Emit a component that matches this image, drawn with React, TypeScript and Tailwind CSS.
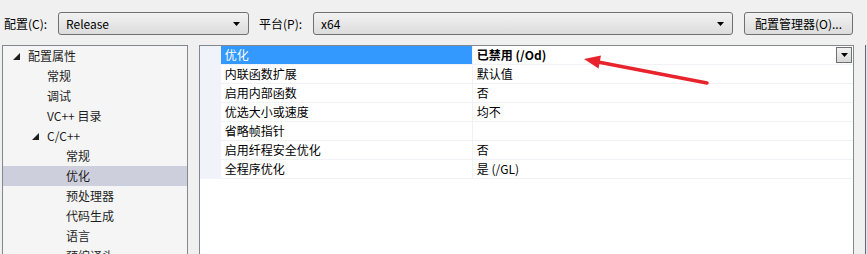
const font = { fontFamily: '"Noto Sans CJK SC", "Noto Sans", sans-serif' };

const Tri = () => (
  <svg width="7" height="7" viewBox="0 0 7 7" className="shrink-0">
    <polygon points="7,0 7,7 0,7" fill="#1e1e1e" />
  </svg>
);

const Caret = () => (
  <svg width="7" height="4" viewBox="0 0 7 4">
    <polygon points="0,0 7,0 3.5,4" fill="#000" />
  </svg>
);

const Select = ({ value, width }: { value: string; width: string }) => (
  <div
    className={`${width} h-[23px] flex items-center justify-between pl-[7px] pr-[8px] rounded-[3px] border border-[#707070] bg-gradient-to-b from-[#f2f2f2] to-[#dcdcdc] text-[12px] text-black`}
  >
    <span>{value}</span>
    <Caret />
  </div>
);

const tree = [
  { label: '配置属性', level: 0, open: true },
  { label: '常规', level: 1 },
  { label: '调试', level: 1 },
  { label: 'VC++ 目录', level: 1 },
  { label: 'C/C++', level: 1, open: true },
  { label: '常规', level: 2 },
  { label: '优化', level: 2, selected: true },
  { label: '预处理器', level: 2 },
  { label: '代码生成', level: 2 },
  { label: '语言', level: 2 },
  { label: '预编译头', level: 2 },
];

const indent = ['pl-[10px]', 'pl-[29px]', 'pl-[48px]'];

const props = [
  { name: '优化', value: '已禁用 (/Od)', selected: true },
  { name: '内联函数扩展', value: '默认值' },
  { name: '启用内部函数', value: '否' },
  { name: '优选大小或速度', value: '均不' },
  { name: '省略帧指针', value: '' },
  { name: '启用纤程安全优化', value: '否' },
  { name: '全程序优化', value: '是 (/GL)' },
];

export default function App() {
  return (
    <div className="relative w-[867px] h-[254px] overflow-hidden bg-[#f0f0f0] text-[12px] text-black" style={font}>
      {/* top bar */}
      <div className="flex items-center h-[23px] mt-[12px] pl-[4px]">
        <span className="w-[54px]">配置(C):</span>
        <Select value="Release" width="w-[191px]" />
        <span className="ml-[10px] w-[54px]">平台(P):</span>
        <Select value="x64" width="w-[420px]" />
        <div className="ml-[11px] w-[109px] h-[23px] flex items-center justify-center rounded-[3px] border border-[#707070] bg-gradient-to-b from-[#f2f2f2] to-[#dcdcdc]">
          配置管理器(O)...
        </div>
      </div>

      {/* main area */}
      <div className="flex mt-[10px] pl-[2px] h-[220px]">
        <div className="w-[186px] h-full border border-[#828790] bg-[#f5f5f5] pt-[0px]">
          {tree.map((t, i) => (
            <div
              key={i}
              className={`h-[20px] flex items-center ${indent[t.level]} ${t.selected ? 'bg-[#cdd0dc]' : ''}`}
            >
              <span className="w-[15px] flex items-center">{t.open ? <Tri /> : null}</span>
              <span className="leading-[20px] whitespace-nowrap text-[#1e1e1e]">{t.label}</span>
            </div>
          ))}
        </div>

        <div className="ml-[11px] w-[656px] h-full border border-[#828790] bg-white">
          {props.map((p, i) => (
            <div key={i} className="flex h-[19px] bg-[#f0f4fa]">
              <div
                className={`ml-[21px] w-[252px] h-full flex items-center pl-[4px] border-b border-r border-[#f0f2f5] ${
                  p.selected ? 'bg-[#3399ff] text-white' : 'bg-white'
                }`}
              >
                {p.name}
              </div>
              <div className="flex-1 h-full flex items-center justify-between pl-[4px] pr-[1px] border-b border-[#f0f2f5] bg-white">
                <span className={p.selected ? 'font-bold' : ''}>{p.value}</span>
                {p.selected && (
                  <div className="w-[16px] h-[16px] flex items-center justify-center border border-[#707070] bg-gradient-to-b from-[#f2f2f2] to-[#d8d8d8]">
                    <Caret />
                  </div>
                )}
              </div>
            </div>
          ))}
        </div>

        <div className="ml-[11px] w-[1px] h-full bg-[#5b6b7d]" />
        <div className="w-[1px] h-full bg-[#dbe8f5]" />
      </div>

      {/* red arrow annotation */}
      <svg className="absolute left-0 top-0 pointer-events-none" width="867" height="254">
        <line x1="707" y1="83" x2="598" y2="62" stroke="#e8232b" strokeWidth="3.5" strokeLinecap="round" />
        <polygon points="584,59 601,55.5 598.5,68.5" fill="#e8232b" />
      </svg>
    </div>
  );
}
